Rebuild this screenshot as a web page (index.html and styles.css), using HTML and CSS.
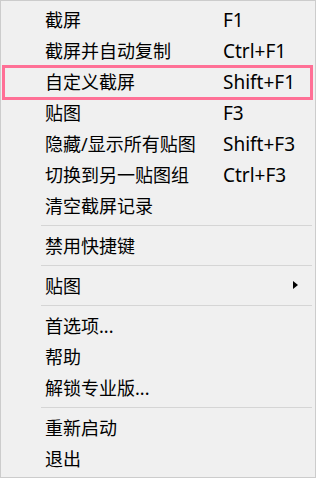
FILE: index.html
```html
<!DOCTYPE html>
<html>
<head>
    <title>menu</title>
    <meta charset="utf-8" />
    <link rel="stylesheet" href="styles.css">
</head>
<body>
    <div class="menu">
        <div class="item"><span class="label">截屏</span><span class="key">F1</span></div>
        <div class="item"><span class="label">截屏并自动复制</span><span class="key">Ctrl+F1</span></div>
        <div class="item marked"><span class="label">自定义截屏</span><span class="key">Shift+F1</span></div>
        <div class="item"><span class="label">贴图</span><span class="key">F3</span></div>
        <div class="item"><span class="label">隐藏/显示所有贴图</span><span class="key">Shift+F3</span></div>
        <div class="item"><span class="label">切换到另一贴图组</span><span class="key">Ctrl+F3</span></div>
        <div class="item"><span class="label">清空截屏记录</span></div>
        <div class="sep"></div>
        <div class="item"><span class="label">禁用快捷键</span></div>
        <div class="sep"></div>
        <div class="item sub"><span class="label">贴图</span><span class="arrow"></span></div>
        <div class="sep"></div>
        <div class="item"><span class="label">首选项...</span></div>
        <div class="item"><span class="label">帮助</span></div>
        <div class="item"><span class="label">解锁专业版...</span></div>
        <div class="sep"></div>
        <div class="item"><span class="label">重新启动</span></div>
        <div class="item"><span class="label">退出</span></div>
    </div>
</body>
</html>
```

FILE: styles.css
```css
html,
body {
    margin: 0px;
    padding: 0px;
}

.menu {
    box-sizing: border-box;
    width: 316px;
    height: 478px;
    padding: 3px 0px 3px 0px;
    background-color: #f0f0f0;
    border: 1px solid #cccccc;
    font-family: "Noto Sans", "Noto Sans CJK SC", sans-serif;
    font-size: 18px;
    color: #000000;
}

.item {
    position: relative;
    display: flex;
    height: 31px;
    line-height: 32px;
    padding-left: 44px;
}

.item .label {
    width: 178px;
    white-space: nowrap;
}

.item .key {
    font-size: 19px;
    white-space: nowrap;
}

.item.marked::after {
    content: "";
    position: absolute;
    left: 1px;
    top: -1px;
    width: 305px;
    height: 29px;
    border: 3px solid #ff7096;
}

.item.sub .arrow {
    position: absolute;
    left: 292px;
    top: 11px;
    width: 0px;
    height: 0px;
    border-top: 4.5px solid transparent;
    border-bottom: 4.5px solid transparent;
    border-left: 5px solid #000000;
}

.sep {
    height: 1px;
    margin: 4px 3px 4px 40px;
    background-color: #d5d5d5;
}
```
